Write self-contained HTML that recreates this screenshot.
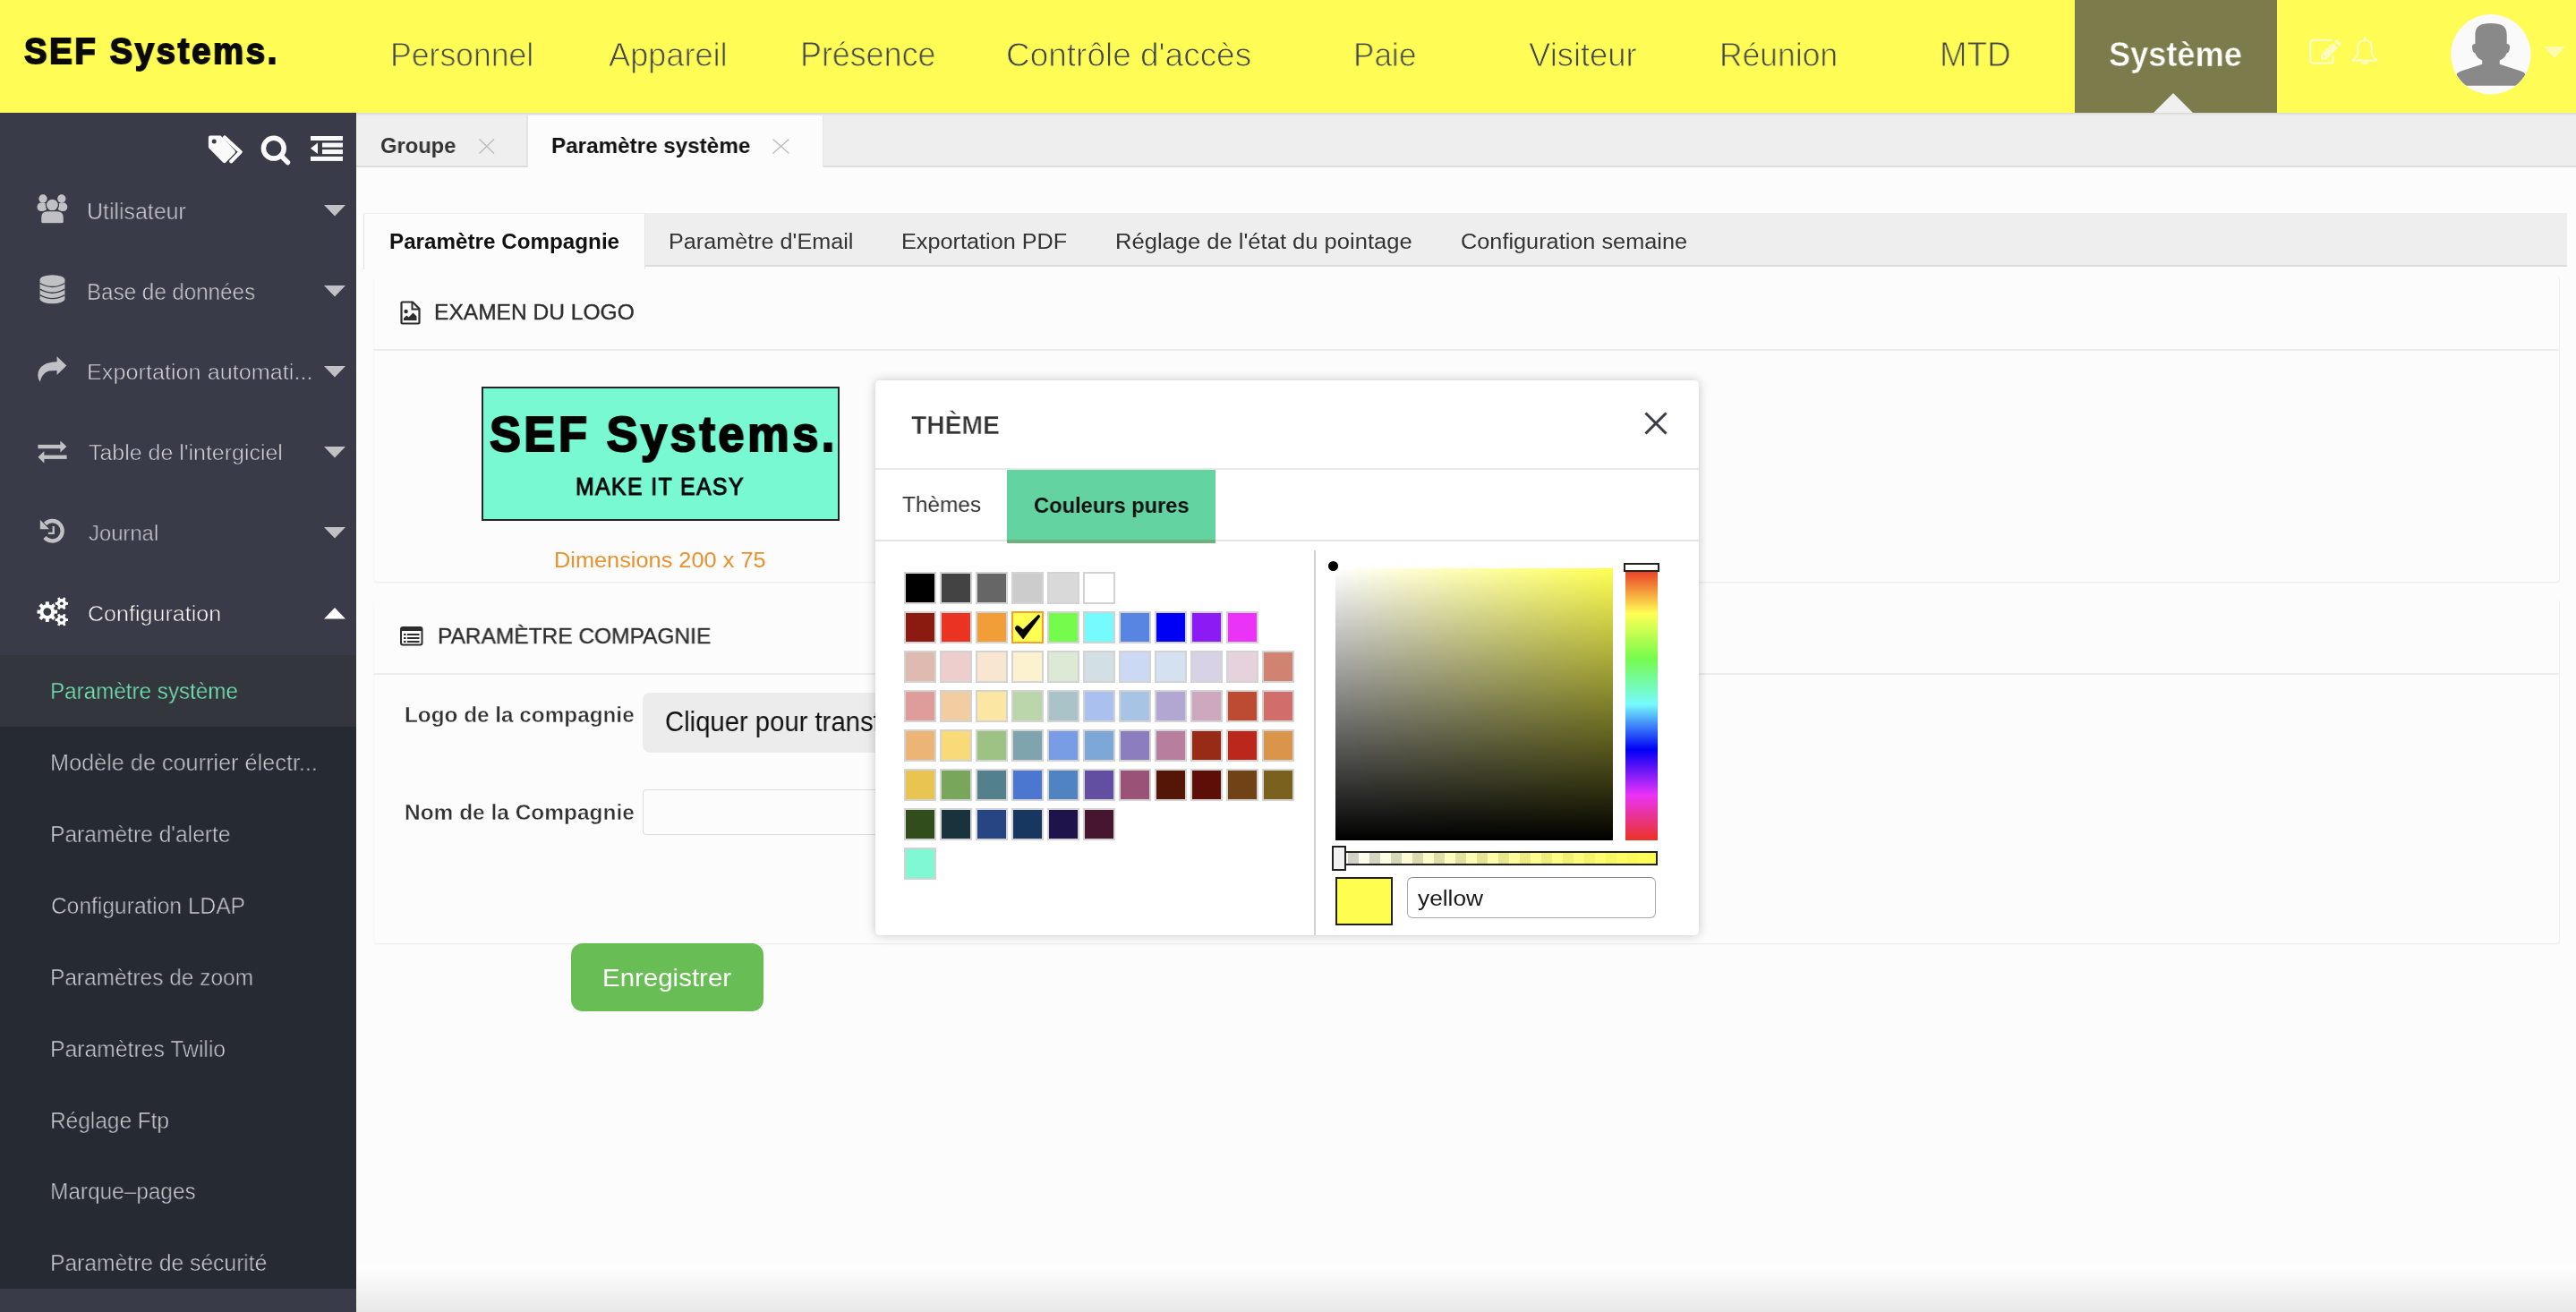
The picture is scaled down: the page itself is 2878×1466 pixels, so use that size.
<!DOCTYPE html><html><head><meta charset="utf-8"><style>
html,body{margin:0;padding:0;width:2878px;height:1466px;overflow:hidden;background:#fafafa;font-family:"Liberation Sans",sans-serif;}
.t{position:absolute;line-height:1;white-space:nowrap;transform-origin:0 0;will-change:transform;}
.a{position:absolute;}
svg{position:absolute;overflow:visible}
</style></head><body>

<div class="a" style="left:0;top:0;width:2878px;height:126px;background:#fffc55;"></div>
<div class="a" style="left:398px;top:126px;width:2480px;height:2px;background:linear-gradient(#dedcd0,#eeeeee);"></div>
<div class="t" style="left:26.95px;top:37.13px;font-size:40.71px;font-weight:700;color:#0a0a0a;transform:scaleX(0.9393);letter-spacing:2.85px;-webkit-text-stroke:1.8px #0a0a0a;">SEF Systems.</div>
<div class="t" style="left:436.15px;top:43.59px;font-size:36.28px;font-weight:400;color:#41454f;transform:scaleX(0.9811);-webkit-text-stroke:0.9px #fffc55;">Personnel</div>
<div class="t" style="left:679.82px;top:43.59px;font-size:36.28px;font-weight:400;color:#41454f;transform:scaleX(0.9968);-webkit-text-stroke:0.9px #fffc55;">Appareil</div>
<div class="t" style="left:894.13px;top:42.03px;font-size:38.12px;font-weight:400;color:#41454f;transform:scaleX(0.9406);-webkit-text-stroke:0.9px #fffc55;">Présence</div>
<div class="t" style="left:1124.15px;top:43.59px;font-size:36.28px;font-weight:400;color:#41454f;transform:scaleX(1.0192);-webkit-text-stroke:0.9px #fffc55;">Contrôle d&#x27;accès</div>
<div class="t" style="left:1512.18px;top:43.59px;font-size:36.28px;font-weight:400;color:#41454f;transform:scaleX(0.9703);-webkit-text-stroke:0.9px #fffc55;">Paie</div>
<div class="t" style="left:1707.82px;top:43.59px;font-size:36.28px;font-weight:400;color:#41454f;transform:scaleX(1.0039);-webkit-text-stroke:0.9px #fffc55;">Visiteur</div>
<div class="t" style="left:1921.16px;top:43.59px;font-size:36.28px;font-weight:400;color:#41454f;transform:scaleX(0.9779);-webkit-text-stroke:0.9px #fffc55;">Réunion</div>
<div class="t" style="left:2167.06px;top:42.03px;font-size:38.12px;font-weight:400;color:#41454f;transform:scaleX(0.9645);-webkit-text-stroke:0.9px #fffc55;">MTD</div>
<div class="a" style="left:2318px;top:0;width:226px;height:126px;background:#7b7b4b;"></div>
<div class="t" style="left:2356.41px;top:42.18px;font-size:38.29px;font-weight:700;color:#fff;transform:scaleX(0.9448);-webkit-text-stroke:0.5px #7b7b4b;">Système</div>
<svg style="left:0;top:0" width="2878" height="130"><polygon points="2405,127 2428,104 2451,127" fill="#f0f0f0"/></svg>
<svg style="left:2570px;top:35px" width="100" height="45" viewBox="2570 35 100 45">
<path d="M2604.7 44.9 H2584.6 Q2581.3 44.9 2581.3 48.2 V67.3 Q2581.3 70.6 2584.6 70.6 H2603.2 Q2606.5 70.6 2606.5 67.3 V62" fill="none" stroke="#fafcc4" stroke-width="2.4"/>
<polygon points="2606.5,48.1 2611.9,53.4 2598.6,66.7 2593,66.7 2593,61.1" fill="#fafcc4"/>
<polygon points="2608.1,46.4 2611,43.9 2615.8,48.7 2613.3,51.8" fill="#fafcc4"/>
<path d="M2600.2 57 L2605.4 51.6" stroke="#fffc55" stroke-width="0.7"/>
<path d="M2595.5 61.5 L2597.2 62.8 L2596.2 64" fill="none" stroke="#fffc55" stroke-width="1.2"/>
<path d="M2642 45 C2637 45 2634.3 48.5 2634.3 53 V58.5 C2634.3 62 2632 64.5 2628.5 67.6 H2655.5 C2652 64.5 2649.7 62 2649.7 58.5 V53 C2649.7 48.5 2647 45 2642 45 Z" fill="none" stroke="#fafcc4" stroke-width="2.1" stroke-linejoin="round"/>
<circle cx="2642" cy="42.9" r="1.6" fill="#fafcc4"/>
<path d="M2638.2 68.6 A3.8 3.8 0 0 0 2645.8 68.6 Z" fill="#fafcc4"/>
</svg>
<svg style="left:2737px;top:15px" width="92" height="92" viewBox="0 0 92 92">
<defs><clipPath id="avc"><circle cx="45.9" cy="45.8" r="44.6"/></clipPath></defs>
<circle cx="45.9" cy="45.8" r="44.7" fill="#fafafa"/>
<g clip-path="url(#avc)">
<path d="M46 11 C58 11 63.7 14 63.7 24 V34 C66 34 67.5 35.5 67 38.5 C66.5 42 65.5 44.4 63.5 44.6 C62 49 59 51.5 55.7 52.5 V56.7 L75 63 C82 65 85 67 85 70 V80.8 H7 V70 C7 67 10 65 17 63 L36.2 56.7 V52.5 C33 51.5 30 49 28.5 44.6 C26.5 44.4 25.5 42 25 38.5 C24.5 35.5 26 34 28.4 34 V24 C28.4 14 34 11 46 11 Z" fill="#898989"/>
</g></svg>
<svg style="left:2840px;top:50px" width="28" height="16"><polygon points="2,2 26,2 14,15" fill="#fdfbb0"/></svg>
<div class="a" style="left:0;top:126px;width:398px;height:606px;background:#393c48;"></div>
<div class="a" style="left:0;top:732px;width:398px;height:708px;background:#262a33;"></div>
<div class="a" style="left:0;top:732px;width:398px;height:80px;background:#33363d;"></div>
<div class="a" style="left:0;top:1440px;width:398px;height:26px;background:#393c48;"></div>
<svg style="left:230px;top:149px" width="46" height="38" viewBox="0 0 46 38">
<path d="M4.9 2.5 H16.5 L32.3 18.9 Q33.5 20.7 32.3 22.3 L22.5 32.3 Q20.7 34 18.9 32.3 L2.9 16 V4.5 Q2.9 2.5 4.9 2.5 Z" fill="#fafafa"/>
<circle cx="9.2" cy="9" r="2.5" fill="#393c48"/>
<path d="M21 4.6 L38.6 20.7 L28.3 31.2" fill="none" stroke="#fafafa" stroke-width="4.2" stroke-linejoin="round" stroke-linecap="round"/>
</svg>
<svg style="left:290px;top:150px" width="38" height="38" viewBox="0 0 38 38">
<circle cx="15.8" cy="15.7" r="11.4" fill="none" stroke="#fafafa" stroke-width="5.5"/>
<path d="M24 24 L31.5 31.5" stroke="#fafafa" stroke-width="5.5" stroke-linecap="round"/>
</svg>
<svg style="left:346px;top:151px" width="40" height="32" viewBox="0 0 40 32">
<rect x="1" y="1" width="36" height="5" fill="#fafafa"/>
<rect x="14" y="8.6" width="23" height="5" fill="#fafafa"/>
<rect x="14" y="16.1" width="23" height="5" fill="#fafafa"/>
<rect x="1" y="23.9" width="36" height="5" fill="#fafafa"/>
<polygon points="9,8.6 9,21.1 1,14.7" fill="#fafafa"/>
</svg>
<div class="t" style="left:97.43px;top:223.91px;font-size:25.38px;font-weight:400;color:#d0d1d4;transform:scaleX(0.9817);-webkit-text-stroke:0.55px #393c48;">Utilisateur</div>
<svg style="left:362px;top:229px" width="25" height="13"><polygon points="0,0 24,0 12,12.5" fill="#c0c1c4"/></svg>
<div class="t" style="left:97.37px;top:313.88px;font-size:25.66px;font-weight:400;color:#d0d1d4;transform:scaleX(0.9417);-webkit-text-stroke:0.55px #393c48;">Base de données</div>
<svg style="left:362px;top:319px" width="25" height="13"><polygon points="0,0 24,0 12,12.5" fill="#c0c1c4"/></svg>
<div class="t" style="left:97.28px;top:403.98px;font-size:24.83px;font-weight:400;color:#d0d1d4;transform:scaleX(1.0161);-webkit-text-stroke:0.55px #393c48;">Exportation automati...</div>
<svg style="left:362px;top:409px" width="25" height="13"><polygon points="0,0 24,0 12,12.5" fill="#c0c1c4"/></svg>
<div class="t" style="left:98.80px;top:493.98px;font-size:24.83px;font-weight:400;color:#d0d1d4;transform:scaleX(1.0044);-webkit-text-stroke:0.55px #393c48;">Table de l&#x27;intergiciel</div>
<svg style="left:362px;top:499px" width="25" height="13"><polygon points="0,0 24,0 12,12.5" fill="#c0c1c4"/></svg>
<div class="t" style="left:98.94px;top:583.98px;font-size:24.83px;font-weight:400;color:#d0d1d4;transform:scaleX(0.9604);-webkit-text-stroke:0.55px #393c48;">Journal</div>
<svg style="left:362px;top:589px" width="25" height="13"><polygon points="0,0 24,0 12,12.5" fill="#c0c1c4"/></svg>
<div class="t" style="left:98.05px;top:673.98px;font-size:24.83px;font-weight:400;color:#ffffff;transform:scaleX(1.0094);-webkit-text-stroke:0.55px #393c48;">Configuration</div>
<svg style="left:362px;top:679px" width="25" height="13"><polygon points="0,12.5 24,12.5 12,0" fill="#fff"/></svg>
<svg style="left:0;top:0" width="100" height="720" viewBox="0 0 100 720">
<g fill="#c0c1c4">
<circle cx="48" cy="222" r="4.7"/><circle cx="68.8" cy="222" r="4.7"/>
<rect x="41.5" y="226.5" width="11" height="9.5" rx="4.5"/><rect x="64.3" y="226.5" width="11" height="9.5" rx="4.5"/>
<circle cx="58.4" cy="229" r="7" stroke="#393c48" stroke-width="1.3"/>
<path d="M45.6 249.8 V243 Q45.6 235.6 53 235.6 H64 Q71.4 235.6 71.4 243 V247.8 Q71.4 249.8 69.4 249.8 H47.6 Q45.6 249.8 45.6 247.8 Z" stroke="#393c48" stroke-width="1.3"/>
</g>
<g fill="#c0c1c4">
<ellipse cx="58.5" cy="312.6" rx="13.9" ry="5.4"/>
<rect x="44.6" y="312.6" width="27.8" height="21.5"/>
<ellipse cx="58.5" cy="334" rx="13.9" ry="5.2"/>
</g>
<g fill="none" stroke="#393c48" stroke-width="1.4">
<path d="M44.6 316.5 Q58.5 324.5 72.4 316.5"/>
<path d="M44.6 323.2 Q58.5 331.2 72.4 323.2"/>
<path d="M44.6 329.6 Q58.5 337.6 72.4 329.6"/>
</g>
<path d="M74.3 408.6 L63.6 398.2 V404.3 C52 404.3 42.3 409 42.3 419.5 Q42.3 423.5 44.7 426.8 Q46.5 417.5 54.5 414.6 Q58 413.9 63.6 413.9 V419 Z" fill="#c0c1c4"/>
<g fill="#c0c1c4">
<rect x="42.4" y="496.9" width="26" height="4.3"/><polygon points="67.4,492.5 74.4,499.05 67.4,505.6"/>
<rect x="48.8" y="508.6" width="25.8" height="4.3"/><polygon points="49.4,503.9 42.4,510.75 49.4,517.6"/>
</g>
<path d="M49.97 600.5 A11.2 11.2 0 1 0 50.5 585.4" fill="none" stroke="#c0c1c4" stroke-width="4.4"/>
<polygon points="44.8,580.8 44.8,591.2 55,591.2" fill="#c0c1c4"/>
<path d="M59.75 587.9 V595.85 H53.9" fill="none" stroke="#c0c1c4" stroke-width="2.3"/>
</svg>
<svg style="left:30px;top:655px" width="50" height="50" viewBox="30 655 50 50"><circle cx="52.8" cy="683.6" r="8.4" fill="#fff"/><rect x="50.80" y="672.30" width="4.0" height="22.60" fill="#fff" transform="rotate(0.0 52.8 683.6)"/><rect x="50.80" y="672.30" width="4.0" height="22.60" fill="#fff" transform="rotate(45.0 52.8 683.6)"/><rect x="50.80" y="672.30" width="4.0" height="22.60" fill="#fff" transform="rotate(90.0 52.8 683.6)"/><rect x="50.80" y="672.30" width="4.0" height="22.60" fill="#fff" transform="rotate(135.0 52.8 683.6)"/><circle cx="52.8" cy="683.6" r="4.4" fill="#393c48"/><circle cx="68.8" cy="674.3" r="6.2" fill="#393c48"/><rect x="66.60" y="666.20" width="4.4" height="16.20" fill="#393c48" transform="rotate(90.0 68.8 674.3)"/><rect x="66.60" y="666.20" width="4.4" height="16.20" fill="#393c48" transform="rotate(150.0 68.8 674.3)"/><rect x="66.60" y="666.20" width="4.4" height="16.20" fill="#393c48" transform="rotate(210.0 68.8 674.3)"/><circle cx="68.8" cy="674.3" r="5.2" fill="#fff"/><rect x="67.40" y="667.10" width="2.8" height="14.40" fill="#fff" transform="rotate(90.0 68.8 674.3)"/><rect x="67.40" y="667.10" width="2.8" height="14.40" fill="#fff" transform="rotate(150.0 68.8 674.3)"/><rect x="67.40" y="667.10" width="2.8" height="14.40" fill="#fff" transform="rotate(210.0 68.8 674.3)"/><circle cx="68.8" cy="674.3" r="1.9" fill="#393c48"/><circle cx="68.8" cy="692.6" r="6.2" fill="#393c48"/><rect x="66.60" y="684.50" width="4.4" height="16.20" fill="#393c48" transform="rotate(90.0 68.8 692.6)"/><rect x="66.60" y="684.50" width="4.4" height="16.20" fill="#393c48" transform="rotate(150.0 68.8 692.6)"/><rect x="66.60" y="684.50" width="4.4" height="16.20" fill="#393c48" transform="rotate(210.0 68.8 692.6)"/><circle cx="68.8" cy="692.6" r="5.2" fill="#fff"/><rect x="67.40" y="685.40" width="2.8" height="14.40" fill="#fff" transform="rotate(90.0 68.8 692.6)"/><rect x="67.40" y="685.40" width="2.8" height="14.40" fill="#fff" transform="rotate(150.0 68.8 692.6)"/><rect x="67.40" y="685.40" width="2.8" height="14.40" fill="#fff" transform="rotate(210.0 68.8 692.6)"/><circle cx="68.8" cy="692.6" r="1.9" fill="#393c48"/></svg>
<div class="t" style="left:56.36px;top:759.02px;font-size:26.67px;font-weight:400;color:#72e6b3;transform:scaleX(0.9084);-webkit-text-stroke:0.35px #33363d;">Paramètre système</div>
<div class="t" style="left:56.28px;top:840.01px;font-size:25.38px;font-weight:400;color:#d0d1d4;transform:scaleX(0.9951);-webkit-text-stroke:0.55px #262a33;">Modèle de courrier électr...</div>
<div class="t" style="left:56.33px;top:919.91px;font-size:25.38px;font-weight:400;color:#d0d1d4;transform:scaleX(0.9692);-webkit-text-stroke:0.55px #262a33;">Paramètre d&#x27;alerte</div>
<div class="t" style="left:57.07px;top:999.81px;font-size:25.38px;font-weight:400;color:#d0d1d4;transform:scaleX(0.9676);-webkit-text-stroke:0.55px #262a33;">Configuration LDAP</div>
<div class="t" style="left:56.34px;top:1079.71px;font-size:25.38px;font-weight:400;color:#d0d1d4;transform:scaleX(0.9636);-webkit-text-stroke:0.55px #262a33;">Paramètres de zoom</div>
<div class="t" style="left:56.32px;top:1159.61px;font-size:25.38px;font-weight:400;color:#d0d1d4;transform:scaleX(0.9747);-webkit-text-stroke:0.55px #262a33;">Paramètres Twilio</div>
<div class="t" style="left:56.35px;top:1239.51px;font-size:25.38px;font-weight:400;color:#d0d1d4;transform:scaleX(0.9627);-webkit-text-stroke:0.55px #262a33;">Réglage Ftp</div>
<div class="t" style="left:56.35px;top:1318.32px;font-size:26.67px;font-weight:400;color:#d0d1d4;transform:scaleX(0.9148);-webkit-text-stroke:0.55px #262a33;">Marque–pages</div>
<div class="t" style="left:56.33px;top:1399.31px;font-size:25.38px;font-weight:400;color:#d0d1d4;transform:scaleX(0.9706);-webkit-text-stroke:0.55px #262a33;">Paramètre de sécurité</div>
<!--CONTENT-->
<div class="a" style="left:398px;top:126px;width:2480px;height:61px;background:#eeeeee;border-bottom:2px solid #dcdcdc;box-sizing:border-box;"></div>
<div class="a" style="left:398px;top:126px;width:2480px;height:3px;background:linear-gradient(#d6d6d2,#eeeeee);"></div>
<div class="a" style="left:398px;top:130px;width:191px;height:55px;background:#efefef;border-right:1px solid #e2e2e2;box-sizing:border-box;"></div>
<div class="a" style="left:589px;top:129px;width:331px;height:61px;background:#fcfcfc;border-left:1px solid #e6e6e6;border-right:1px solid #e6e6e6;box-sizing:border-box;"></div>
<div class="t" style="left:425.35px;top:151.22px;font-size:24.43px;font-weight:700;color:#333;transform:scaleX(0.9716);">Groupe</div>
<div class="t" style="left:616.42px;top:150.92px;font-size:24.78px;font-weight:700;color:#111;transform:scaleX(0.9783);">Paramètre système</div>
<svg style="left:534px;top:154px" width="20" height="19"><path d="M1.5 1.5 L18 17.5 M18 1.5 L1.5 17.5" stroke="#bdbdbd" stroke-width="1.45"/></svg>
<svg style="left:862px;top:154px" width="21" height="19"><path d="M1.5 1.5 L19.5 17.5 M19.5 1.5 L1.5 17.5" stroke="#bdbdbd" stroke-width="1.45"/></svg>
<div class="a" style="left:398px;top:187px;width:2480px;height:1279px;background:linear-gradient(#fcfcfc 0,#fcfcfc 1225px,#fdfdfd 1230px,#e8e8e8 1279px);"></div>
<div class="a" style="left:406px;top:238px;width:2462px;height:60px;background:#eeeeee;border-bottom:2px solid #dcdcdc;box-sizing:border-box;"></div>
<div class="a" style="left:406px;top:239px;width:315px;height:62px;background:#fcfcfc;border-left:1px solid #e4e4e4;border-right:1px solid #e4e4e4;box-sizing:border-box;"></div>
<div class="t" style="left:435.43px;top:258.00px;font-size:23.86px;font-weight:700;color:#111;transform:scaleX(1.0151);">Paramètre Compagnie</div>
<div class="t" style="left:747.08px;top:257.73px;font-size:24.41px;font-weight:400;color:#333;transform:scaleX(1.0320);">Paramètre d&#x27;Email</div>
<div class="t" style="left:1006.98px;top:257.73px;font-size:24.41px;font-weight:400;color:#333;transform:scaleX(1.0344);">Exportation PDF</div>
<div class="t" style="left:1245.56px;top:257.73px;font-size:24.41px;font-weight:400;color:#333;transform:scaleX(1.0470);">Réglage de l&#x27;état du pointage</div>
<div class="t" style="left:1632.04px;top:257.73px;font-size:24.41px;font-weight:400;color:#333;transform:scaleX(1.0362);">Configuration semaine</div>
<div class="a" style="left:418px;top:309px;width:2441px;height:341px;background:#fcfcfc;box-shadow:0 1px 2px rgba(0,0,0,0.08),1px 0 1px rgba(0,0,0,0.03);border-radius:3px;"></div>
<div class="a" style="left:418px;top:390px;width:2441px;height:1.5px;background:#ececec;"></div>
<div class="a" style="left:418px;top:670px;width:2441px;height:384px;background:#fcfcfc;box-shadow:0 1px 2px rgba(0,0,0,0.08),1px 0 1px rgba(0,0,0,0.03);border-radius:3px;"></div>
<div class="a" style="left:418px;top:752px;width:2441px;height:1.5px;background:#ececec;"></div>
<div class="t" style="left:485.43px;top:336.90px;font-size:24.57px;font-weight:400;color:#2d2d2d;-webkit-text-stroke:0.35px #2d2d2d;">EXAMEN DU LOGO</div>
<div class="t" style="left:488.84px;top:699.27px;font-size:24.71px;font-weight:400;color:#2d2d2d;transform:scaleX(0.9915);-webkit-text-stroke:0.35px #2d2d2d;">PARAMÈTRE COMPAGNIE</div>
<svg style="left:447px;top:336px" width="24" height="27" viewBox="0 0 24 27">
<path d="M2.5 1.5 H14 L21.5 9 V24.5 a1 1 0 0 1 -1 1 H2.5 a1 1 0 0 1 -1 -1 V2.5 a1 1 0 0 1 1 -1 Z" fill="none" stroke="#2d2d2d" stroke-width="2.2"/>
<path d="M13.5 2 V9.5 H21" fill="none" stroke="#2d2d2d" stroke-width="2"/>
<circle cx="6.6" cy="12" r="2.2" fill="#2d2d2d"/>
<path d="M4 22 L4 19.5 L7.5 16.5 L9.5 18.5 L14.5 13.5 L18.5 17.5 V22 Z" fill="#2d2d2d"/>
</svg>
<svg style="left:447px;top:700px" width="26" height="22" viewBox="0 0 26 22">
<rect x="1" y="1" width="23.5" height="19.5" rx="2" fill="none" stroke="#2d2d2d" stroke-width="2"/>
<rect x="1" y="1" width="23.5" height="4" fill="#2d2d2d"/>
<rect x="4" y="8" width="2.5" height="2" fill="#2d2d2d"/><rect x="8" y="8" width="13.5" height="2" fill="#2d2d2d"/>
<rect x="4" y="12" width="2.5" height="2" fill="#2d2d2d"/><rect x="8" y="12" width="13.5" height="2" fill="#2d2d2d"/>
<rect x="4" y="16" width="2.5" height="2" fill="#2d2d2d"/><rect x="8" y="16" width="13.5" height="2" fill="#2d2d2d"/>
</svg>
<div class="a" style="left:538px;top:432px;width:396px;height:146px;background:#78f9d2;border:2px solid #262626;"></div>
<div class="t" style="left:547.43px;top:457.77px;font-size:55.43px;font-weight:700;color:#030303;transform:scaleX(0.9416);letter-spacing:3.88px;-webkit-text-stroke:2.2px #030303;">SEF Systems.</div>
<div class="t" style="left:642.87px;top:530.38px;font-size:27.71px;font-weight:400;color:#0a0a0a;transform:scaleX(0.8918);letter-spacing:1.66px;-webkit-text-stroke:1.1px #0a0a0a;">MAKE IT EASY</div>
<div class="t" style="left:619.27px;top:613.63px;font-size:24.41px;font-weight:400;color:#e8912d;transform:scaleX(1.0379);">Dimensions 200 x 75</div>
<div class="t" style="left:451.92px;top:787.55px;font-size:23.45px;font-weight:700;color:#333;transform:scaleX(1.0373);-webkit-text-stroke:0.4px #fcfcfc;">Logo de la compagnie</div>
<div class="t" style="left:451.91px;top:895.58px;font-size:24.00px;font-weight:700;color:#333;transform:scaleX(1.0188);-webkit-text-stroke:0.4px #fcfcfc;">Nom de la Compagnie</div>
<div class="a" style="left:718px;top:774px;width:400px;height:67px;background:#ececec;border-radius:8px;"></div>
<div class="t" style="left:743.14px;top:792.22px;font-size:30.80px;font-weight:400;color:#111;transform:scaleX(0.9500);">Cliquer pour transférer</div>
<div class="a" style="left:718px;top:882px;width:400px;height:49px;background:#fcfcfc;border:1.5px solid #dcdcdc;border-radius:4px;"></div>
<div class="a" style="left:638px;top:1054px;width:215px;height:76px;background:#68bd55;border-radius:13px;"></div>
<div class="t" style="left:673.14px;top:1078.14px;font-size:28.41px;font-weight:400;color:#fff;transform:scaleX(1.0371);">Enregistrer</div>
<div class="a" style="left:978px;top:425px;width:920px;height:620px;background:#fff;border-radius:5px;box-shadow:0 0 12px rgba(0,0,0,0.22);"></div>
<div class="t" style="left:1018.12px;top:460.00px;font-size:30.00px;font-weight:700;color:#333;transform:scaleX(0.9416);-webkit-text-stroke:0.5px #fff;">THÈME</div>
<svg style="left:1837px;top:460px" width="26" height="26"><path d="M1.5 1.5 L24.5 24.5 M24.5 1.5 L1.5 24.5" stroke="#3a3b48" stroke-width="3"/></svg>
<div class="a" style="left:978px;top:523px;width:920px;height:1.5px;background:#e8e8e8;"></div>
<div class="a" style="left:978px;top:603px;width:920px;height:1.5px;background:#e4e4e4;"></div>
<div class="a" style="left:1125px;top:525px;width:233px;height:78px;background:#63d3a2;"></div>
<div class="a" style="left:1125px;top:603px;width:233px;height:4px;background:#6db27c;"></div>
<div class="t" style="left:1007.71px;top:552.10px;font-size:24.69px;font-weight:400;color:#333;transform:scaleX(0.9889);">Thèmes</div>
<div class="t" style="left:1155.35px;top:552.56px;font-size:24.14px;font-weight:700;color:#111;transform:scaleX(0.9810);">Couleurs pures</div>
<div class="a" style="left:1468px;top:615px;width:1.5px;height:430px;background:#d2d2d2;"></div>
<div class="a" style="left:1010px;top:639px;width:32px;height:32px;border:2px solid #d3d3d3;background:#000000;"></div><div class="a" style="left:1050px;top:639px;width:32px;height:32px;border:2px solid #d3d3d3;background:#434343;"></div><div class="a" style="left:1090px;top:639px;width:32px;height:32px;border:2px solid #d3d3d3;background:#666666;"></div><div class="a" style="left:1130px;top:639px;width:32px;height:32px;border:2px solid #d3d3d3;background:#cccccc;"></div><div class="a" style="left:1170px;top:639px;width:32px;height:32px;border:2px solid #d3d3d3;background:#d9d9d9;"></div><div class="a" style="left:1210px;top:639px;width:32px;height:32px;border:2px solid #d3d3d3;background:#ffffff;"></div><div class="a" style="left:1010px;top:683px;width:32px;height:32px;border:2px solid #d3d3d3;background:#8b1a10;"></div><div class="a" style="left:1050px;top:683px;width:32px;height:32px;border:2px solid #d3d3d3;background:#ea3323;"></div><div class="a" style="left:1090px;top:683px;width:32px;height:32px;border:2px solid #d3d3d3;background:#f19e38;"></div><div class="a" style="left:1130px;top:683px;width:32px;height:32px;border:2px solid #f0a030;background:#ffff54;"></div><div class="a" style="left:1170px;top:683px;width:32px;height:32px;border:2px solid #d3d3d3;background:#75fb4c;"></div><div class="a" style="left:1210px;top:683px;width:32px;height:32px;border:2px solid #d3d3d3;background:#75fbfd;"></div><div class="a" style="left:1250px;top:683px;width:32px;height:32px;border:2px solid #d3d3d3;background:#5885e1;"></div><div class="a" style="left:1290px;top:683px;width:32px;height:32px;border:2px solid #d3d3d3;background:#0000f5;"></div><div class="a" style="left:1330px;top:683px;width:32px;height:32px;border:2px solid #d3d3d3;background:#8c1af5;"></div><div class="a" style="left:1370px;top:683px;width:32px;height:32px;border:2px solid #d3d3d3;background:#ea33f7;"></div><div class="a" style="left:1010px;top:727px;width:32px;height:32px;border:2px solid #d3d3d3;background:#dfbab1;"></div><div class="a" style="left:1050px;top:727px;width:32px;height:32px;border:2px solid #d3d3d3;background:#eececd;"></div><div class="a" style="left:1090px;top:727px;width:32px;height:32px;border:2px solid #d3d3d3;background:#f8e6d0;"></div><div class="a" style="left:1130px;top:727px;width:32px;height:32px;border:2px solid #d3d3d3;background:#fdf2d0;"></div><div class="a" style="left:1170px;top:727px;width:32px;height:32px;border:2px solid #d3d3d3;background:#dce9d5;"></div><div class="a" style="left:1210px;top:727px;width:32px;height:32px;border:2px solid #d3d3d3;background:#d3e0e3;"></div><div class="a" style="left:1250px;top:727px;width:32px;height:32px;border:2px solid #d3d3d3;background:#ccd9f5;"></div><div class="a" style="left:1290px;top:727px;width:32px;height:32px;border:2px solid #d3d3d3;background:#d3e1f1;"></div><div class="a" style="left:1330px;top:727px;width:32px;height:32px;border:2px solid #d3d3d3;background:#d8d2e7;"></div><div class="a" style="left:1370px;top:727px;width:32px;height:32px;border:2px solid #d3d3d3;background:#e6d2dc;"></div><div class="a" style="left:1410px;top:727px;width:32px;height:32px;border:2px solid #d3d3d3;background:#d08370;"></div><div class="a" style="left:1010px;top:771px;width:32px;height:32px;border:2px solid #d3d3d3;background:#de9d9b;"></div><div class="a" style="left:1050px;top:771px;width:32px;height:32px;border:2px solid #d3d3d3;background:#f2cda2;"></div><div class="a" style="left:1090px;top:771px;width:32px;height:32px;border:2px solid #d3d3d3;background:#fbe6a3;"></div><div class="a" style="left:1130px;top:771px;width:32px;height:32px;border:2px solid #d3d3d3;background:#bcd6ac;"></div><div class="a" style="left:1170px;top:771px;width:32px;height:32px;border:2px solid #d3d3d3;background:#a9c3c8;"></div><div class="a" style="left:1210px;top:771px;width:32px;height:32px;border:2px solid #d3d3d3;background:#aac1f0;"></div><div class="a" style="left:1250px;top:771px;width:32px;height:32px;border:2px solid #d3d3d3;background:#a7c4e5;"></div><div class="a" style="left:1290px;top:771px;width:32px;height:32px;border:2px solid #d3d3d3;background:#b2a7d3;"></div><div class="a" style="left:1330px;top:771px;width:32px;height:32px;border:2px solid #d3d3d3;background:#cea8bc;"></div><div class="a" style="left:1370px;top:771px;width:32px;height:32px;border:2px solid #d3d3d3;background:#bd4b31;"></div><div class="a" style="left:1410px;top:771px;width:32px;height:32px;border:2px solid #d3d3d3;background:#d16d6a;"></div><div class="a" style="left:1010px;top:815px;width:32px;height:32px;border:2px solid #d3d3d3;background:#ecb576;"></div><div class="a" style="left:1050px;top:815px;width:32px;height:32px;border:2px solid #d3d3d3;background:#f9da78;"></div><div class="a" style="left:1090px;top:815px;width:32px;height:32px;border:2px solid #d3d3d3;background:#9dc384;"></div><div class="a" style="left:1130px;top:815px;width:32px;height:32px;border:2px solid #d3d3d3;background:#80a4ae;"></div><div class="a" style="left:1170px;top:815px;width:32px;height:32px;border:2px solid #d3d3d3;background:#789de5;"></div><div class="a" style="left:1210px;top:815px;width:32px;height:32px;border:2px solid #d3d3d3;background:#7ca7d7;"></div><div class="a" style="left:1250px;top:815px;width:32px;height:32px;border:2px solid #d3d3d3;background:#8b7dbe;"></div><div class="a" style="left:1290px;top:815px;width:32px;height:32px;border:2px solid #d3d3d3;background:#b87e9e;"></div><div class="a" style="left:1330px;top:815px;width:32px;height:32px;border:2px solid #d3d3d3;background:#982b15;"></div><div class="a" style="left:1370px;top:815px;width:32px;height:32px;border:2px solid #d3d3d3;background:#bb271a;"></div><div class="a" style="left:1410px;top:815px;width:32px;height:32px;border:2px solid #d3d3d3;background:#da954b;"></div><div class="a" style="left:1010px;top:859px;width:32px;height:32px;border:2px solid #d3d3d3;background:#eac451;"></div><div class="a" style="left:1050px;top:859px;width:32px;height:32px;border:2px solid #d3d3d3;background:#78a65a;"></div><div class="a" style="left:1090px;top:859px;width:32px;height:32px;border:2px solid #d3d3d3;background:#54808c;"></div><div class="a" style="left:1130px;top:859px;width:32px;height:32px;border:2px solid #d3d3d3;background:#4b77d1;"></div><div class="a" style="left:1170px;top:859px;width:32px;height:32px;border:2px solid #d3d3d3;background:#5083c1;"></div><div class="a" style="left:1210px;top:859px;width:32px;height:32px;border:2px solid #d3d3d3;background:#634fa2;"></div><div class="a" style="left:1250px;top:859px;width:32px;height:32px;border:2px solid #d3d3d3;background:#9b5277;"></div><div class="a" style="left:1290px;top:859px;width:32px;height:32px;border:2px solid #d3d3d3;background:#531607;"></div><div class="a" style="left:1330px;top:859px;width:32px;height:32px;border:2px solid #d3d3d3;background:#5d0e07;"></div><div class="a" style="left:1370px;top:859px;width:32px;height:32px;border:2px solid #d3d3d3;background:#704216;"></div><div class="a" style="left:1410px;top:859px;width:32px;height:32px;border:2px solid #d3d3d3;background:#7a611d;"></div><div class="a" style="left:1010px;top:903px;width:32px;height:32px;border:2px solid #d3d3d3;background:#314d1c;"></div><div class="a" style="left:1050px;top:903px;width:32px;height:32px;border:2px solid #d3d3d3;background:#18333c;"></div><div class="a" style="left:1090px;top:903px;width:32px;height:32px;border:2px solid #d3d3d3;background:#274483;"></div><div class="a" style="left:1130px;top:903px;width:32px;height:32px;border:2px solid #d3d3d3;background:#173660;"></div><div class="a" style="left:1170px;top:903px;width:32px;height:32px;border:2px solid #d3d3d3;background:#1e134a;"></div><div class="a" style="left:1210px;top:903px;width:32px;height:32px;border:2px solid #d3d3d3;background:#46162f;"></div><div class="a" style="left:1010px;top:947px;width:32px;height:32px;border:2px solid #d3d3d3;background:#80f8d3;"></div>
<svg style="left:1130px;top:683px" width="34" height="34" viewBox="0 0 34 34"><path d="M4.3 18.4 Q5 16.3 6.6 16.2 Q8 16.3 9 17.3 L13 20.6 L30.2 3.9 Q31.6 4.3 31.9 5.9 L13.1 31.1 L4.6 20.6 Z" fill="#000" stroke="#000" stroke-width="0.6" stroke-linejoin="round"/></svg>
<div class="a" style="left:1492px;top:635px;width:310px;height:304px;background:linear-gradient(to top,#000,rgba(0,0,0,0)),linear-gradient(to right,#fff,#ffff54);"></div>
<div class="a" style="left:1483.5px;top:626.5px;width:11px;height:11px;border-radius:50%;background:#000;"></div>
<div class="a" style="left:1816px;top:635px;width:36px;height:304px;background:linear-gradient(to bottom,#ea3323,#ffff54,#75fb4c,#75fbfd,#0000f5,#ea33f7,#ea3323);"></div>
<div class="a" style="left:1814px;top:629px;width:36px;height:6px;border:2px solid #222;background:#fff;"></div>
<div class="a" style="left:1492px;top:951px;width:356px;height:12px;border:2px solid #222;background:linear-gradient(to right,rgba(255,253,80,0),#fffd50),repeating-linear-gradient(to right,#fcfcfc 0 12px,#cfcfcf 12px 24px);"></div>
<div class="a" style="left:1488px;top:945px;width:12px;height:24px;border:2px solid #222;background:#f2f2f2;"></div>
<div class="a" style="left:1492px;top:980px;width:60px;height:50px;border:2px solid #222;background:#fffd50;"></div>
<div class="a" style="left:1572px;top:980px;width:276px;height:44px;border:1.5px solid #aaa;border-top-color:#888;border-radius:6px;background:#fff;"></div>
<div class="t" style="left:1583.97px;top:991.80px;font-size:24.69px;font-weight:400;color:#1a1a1a;transform:scaleX(1.0640);">yellow</div>
</body></html>
